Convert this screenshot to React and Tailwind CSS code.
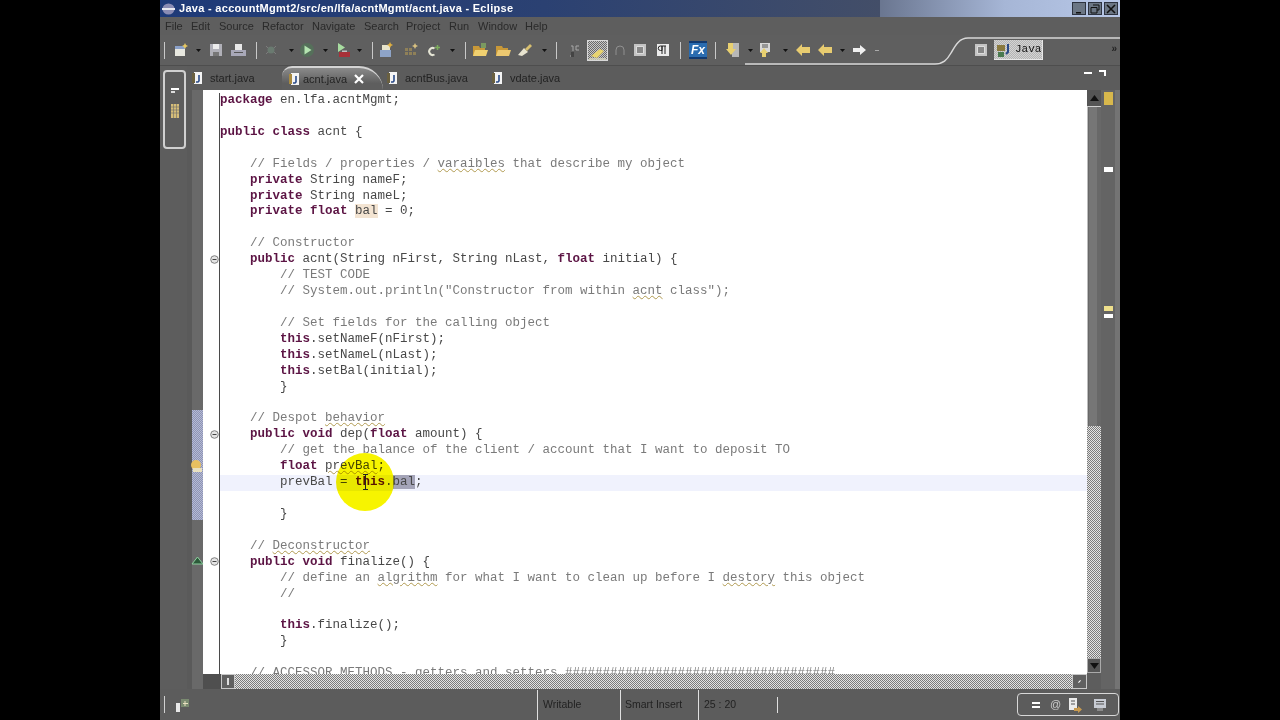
import React from "react";

const uiFont = "font-['Liberation_Sans',sans-serif]";
const checker =
  "bg-[repeating-conic-gradient(#7c7c7c_0%_25%,#e4e4e4_0%_50%)] bg-[length:2px_2px]";

// k = keyword, c = comment, w = misspelt comment word, t = plain code
const code = [
  [["k", "package"], ["t", " en.lfa.acntMgmt;"]],
  [],
  [["k", "public class"], ["t", " acnt {"]],
  [],
  [["c", "    // Fields / properties / "], ["w", "varaibles"], ["c", " that describe my object"]],
  [["k", "    private"], ["t", " String nameF;"]],
  [["k", "    private"], ["t", " String nameL;"]],
  [["k", "    private float"], ["t", " "], ["m", "bal"], ["t", " = 0;"]],
  [],
  [["c", "    // Constructor"]],
  [["k", "    public"], ["t", " acnt(String nFirst, String nLast, "], ["k", "float"], ["t", " initial) {"]],
  [["c", "        // TEST CODE"]],
  [["c", '        // System.out.println("Constructor from within '], ["w", "acnt"], ["c", ' class");']],
  [],
  [["c", "        // Set fields for the calling object"]],
  [["k", "        this"], ["t", ".setNameF(nFirst);"]],
  [["k", "        this"], ["t", ".setNameL(nLast);"]],
  [["k", "        this"], ["t", ".setBal(initial);"]],
  [["t", "        }"]],
  [],
  [["c", "    // Despot "], ["w", "behavior"]],
  [["k", "    public void"], ["t", " dep("], ["k", "float"], ["t", " amount) {"]],
  [["c", "        // get the balance of the client / account that I want to deposit TO"]],
  [["k", "        float"], ["t", " "], ["u", "prevBal"], ["t", ";"]],
  [["t", "        prevBal = "], ["k", "this"], ["t", "."], ["s", "bal"], ["t", ";"]],
  [],
  [["t", "        }"]],
  [],
  [["c", "    // "], ["w", "Deconstructor"]],
  [["k", "    public void"], ["t", " finalize() {"]],
  [["c", "        // define an "], ["w", "algrithm"], ["c", " for what I want to clean up before I "], ["w", "destory"], ["c", " this object"]],
  [["c", "        //"]],
  [],
  [["k", "        this"], ["t", ".finalize();"]],
  [["t", "        }"]],
  [],
  [["c", "    // ACCESSOR METHODS - getters and setters ####################################"]],
];

const segClass = {
  k: "font-bold text-[#5c1444]",
  c: "text-[#7a7a7a]",
  t: "text-[#484848]",
  w: "text-[#7a7a7a] underline decoration-wavy decoration-[#b09a50] decoration-1",
  u: "text-[#484848] underline decoration-wavy decoration-[#b09a50] decoration-1",
  m: "text-[#484848] bg-[#f3e4d2]",
  s: "text-[#484848] bg-[#a4a4b8]",
};

const foldRows = [10, 21, 29];

const Chev = ({ className = "" }) => (
  <svg width="7" height="16" viewBox="0 0 7 16" className={`shrink-0 ${className}`}>
    <path d="M1 7h5l-2.5 3z" fill="#111" />
  </svg>
);

const Sep = ({ className = "" }) => <div className={`w-px h-[17px] bg-[#c8c8c8] shrink-0 ${className}`} />;

// toolbar glyphs, all 16x16
const paths = {
  new: <><path d="M2 4h10v10H2z" fill="#e8e8e0" /><path d="M2 4h10v3H2z" fill="#8aa0c8" /><path d="M12 1l1 2 2 1-2 1-1 2-1-2-2-1 2-1z" fill="#e8c860" /></>,
  save: <><path d="M2 2h12v12H2z" fill="#b0b0b8" /><path d="M5 2h6v5H5z" fill="#ececec" /><path d="M5 10h6v4H5z" fill="#777" /></>,
  print: <><path d="M5 2h7v6H5z" fill="#e8e8e8" /><path d="M1 8h15v6H1z" fill="#a8a8b8" /><path d="M4 10h9v1H4z" fill="#555" /></>,
  debug: <><circle cx="8" cy="8" r="3.5" fill="#6a7a70" /><path d="M3 4l2 2M13 4l-2 2M3 12l2-2M13 12l-2-2" stroke="#7c7c7c" /></>,
  run: <><circle cx="8" cy="8" r="7" fill="#55705a" /><path d="M5.5 3.5l7 4.5-7 4.5z" fill="#b4e4b0" /></>,
  ext: <><path d="M3 1l7 4.5-7 4.5z" fill="#a8dca0" /><path d="M4 10h11v5H4z" fill="#a83038" /><path d="M7 8.5h5V10H7z" fill="#c0c0c0" /></>,
  pkg: <><path d="M2 8h11v7H2z" fill="#8ea4c8" /><path d="M4 3h8v5H4z" fill="#e8e4cc" /><path d="M12 0l1 2 2 1-2 1-1 2-1-2-2-1 2-1z" fill="#e0b040" /></>,
  cls: <><path d="M2 6h3v3H2zM6 6h3v3H6zM2 10h3v3H2zM6 10h3v3H6zM10 10h3v3h-3z" fill="#8f8058" /><path d="M12 1l1 2 2 1-2 1-1 2-1-2-2-1 2-1z" fill="#d8c080" /></>,
  c: <><path d="M9.5 6.5a3.5 3.5 0 1 0 0 6" stroke="#e4e4d4" strokeWidth="2" fill="none" /><path d="M12.5 3v5M10 5.5h5" stroke="#7cae5c" strokeWidth="1.5" /></>,
  open: <><path d="M1 4h6l1 2h5v8H1z" fill="#c89838" /><path d="M3 8h13l-2 6H1z" fill="#f0d070" /><path d="M9 1h5v5H9z" fill="#7a9a60" /></>,
  open2: <><path d="M1 4h6l1 2h5v8H1z" fill="#c89838" /><path d="M3 8h13l-2 6H1z" fill="#ecc870" /></>,
  search: <><path d="M1 13l6-7 4 4-6 4z" fill="#e8e4d0" /><path d="M8 7l5-5 2 2-5 5z" fill="#d8c070" /></>,
  sfc: <><path d="M6 9V4h-2M9 4h3M9 4v4h3M3 14h3" stroke="#a8a8a8" fill="none" /><path d="M4 10h3v5H4z" fill="#444" /></>,
  dim: <path d="M4 13V8a4 4 0 0 1 8 0v5" stroke="#909090" fill="none" />,
  page: <><path d="M2 2h12v12H2z" fill="#c4c4c4" /><path d="M4.5 4.5h7v7h-7z" fill="#888" stroke="#ddd" /></>,
  para: <><path d="M2 2h12v12H2z" fill="#ececec" /><path d="M7 4H5.5a2.2 2.2 0 0 0 0 4.5H7zM7 4v8M10 4v8M7 4h4" stroke="#222" fill="none" /></>,
  down: <><path d="M8 1h7v14H8z" fill="#b8b8b8" /><path d="M4 1h5v6h3l-5 6-5-6h2z" fill="#e8d070" /></>,
  up: <><path d="M3 1h10v9H3z" fill="#d8d8d8" /><path d="M5 3h6M5 5h6" stroke="#555" /><path d="M7 6l4 5H9v4H5v-4H3z" fill="#e8d070" /></>,
  back: <path d="M1 8l6-6v3h8v6H7v3z" fill="#e8cc70" />,
  fwd: <path d="M15 8L9 3v3H2v4h7v3z" fill="#f0f0f0" />,
  task: <><path d="M3 1h8v12H3z" fill="#ececec" /><path d="M5 4h4M5 7h4" stroke="#555" /><path d="M8 11h4V9l4 3.5-4 3.5v-2H8z" fill="#c89a50" /></>,
  msg: <><path d="M2 2h12v9H2z" fill="#c8ccd4" /><path d="M4 4.5h8M4 7h8" stroke="#555" /><path d="M5 11h6v3H5z" fill="#8a8a8a" /></>,
};

const Ic = ({ n, className = "" }) => (
  <svg width="16" height="16" viewBox="0 0 16 16" className={`shrink-0 ${className}`}>
    {paths[n]}
  </svg>
);

const JavaFile = ({ active }) => (
  <svg width="11" height="14" viewBox="0 0 11 14" className="shrink-0">
    <path d="M2 1h8v12H2z" fill="#f4f4f4" />
    <path d="M0 2h3v10H0z" fill={active ? "#a88a40" : "#6a6040"} />
    <path d="M7 4v6l-1 1H4" stroke="#2a4a88" strokeWidth="1.6" fill="none" />
  </svg>
);

const Tab = ({ name, active, className }) => (
  <div className={`flex items-center h-[24px] shrink-0 ${active ? "gap-[3px]" : "gap-[7px]"} ${className}`}>
    <JavaFile active={active} />
    <span className="text-[11px] text-[#232323]">{name}</span>
    {active && (
      <svg width="10" height="10" viewBox="0 0 10 10" className="ml-[4px]">
        <path d="M1 1l8 8M9 1l-8 8" stroke="#fff" strokeWidth="2.2" />
      </svg>
    )}
  </div>
);

const WinBtn = ({ children }) => (
  <div className="w-[14px] h-[13px] bg-[#6b7684] border border-[#2d3340] flex items-center justify-center">
    <svg width="10" height="10" viewBox="0 0 10 10">{children}</svg>
  </div>
);

const menus = [
  ["File", "w-[26px]"],
  ["Edit", "w-[28px]"],
  ["Source", "w-[43px]"],
  ["Refactor", "w-[50px]"],
  ["Navigate", "w-[52px]"],
  ["Search", "w-[42px]"],
  ["Project", "w-[43px]"],
  ["Run", "w-[29px]"],
  ["Window", "w-[47px]"],
  ["Help", "w-[30px]"],
];

export default function App() {
  return (
    <div className={`w-[1280px] h-[720px] bg-black flex justify-center overflow-hidden ${uiFont}`}>
      <div className="relative w-[960px] h-[720px] bg-[#5d5d5d] flex flex-col">
        {/* Title bar */}
        <div className="h-[17px] flex items-center pl-[2px] pr-[2px] bg-[linear-gradient(90deg,#1e3a78_0%,#2b4172_40%,#434e68_75%,#6a7690_75%,#a6b6d6_88%,#b8c8e8_100%)]">
          <svg width="14" height="12" viewBox="0 0 14 12" className="shrink-0">
            <ellipse cx="6.5" cy="6" rx="6" ry="5.5" fill="#8a8cb4" />
            <path d="M0 5h13v2H0z" fill="#e8e8f0" />
          </svg>
          <span className="ml-[3px] text-[11px] font-bold text-white whitespace-nowrap tracking-[0.3px]">
            Java - accountMgmt2/src/en/lfa/acntMgmt/acnt.java - Eclipse
          </span>
          <div className="ml-auto flex gap-[2px]">
            <WinBtn><path d="M2 8h5v1.5H2z" fill="#111" /></WinBtn>
            <WinBtn><path d="M3 1h6v5H7M1 3.5h6v5.5H1z" stroke="#111" fill="none" /></WinBtn>
            <WinBtn><path d="M1 1l8 8M9 1l-8 8" stroke="#111" strokeWidth="1.6" /></WinBtn>
          </div>
        </div>

        {/* Menu bar */}
        <div className="h-[18px] flex items-center pl-[5px] bg-[#5e5e5e]">
          {menus.map(([m, w]) => (
            <span key={m} className={`text-[11px] text-[#2a2a2a] ${w}`}>{m}</span>
          ))}
        </div>

        {/* Toolbar */}
        <div className="relative h-[31px] flex items-center pl-[4px] bg-[#5f5f5f] border-b border-[#4e4e4e]">
          <Sep />
          <Ic n="new" className="ml-[8px]" />
          <Chev className="ml-[6px]" />
          <Ic n="save" className="ml-[6px]" />
          <Ic n="print" className="ml-[6px]" />
          <Sep className="ml-[10px]" />
          <Ic n="debug" className="ml-[6px]" />
          <Chev className="ml-[9px]" />
          <Ic n="run" className="ml-[4px]" />
          <Chev className="ml-[7px]" />
          <Ic n="ext" className="ml-[6px]" />
          <Chev className="ml-[5px]" />
          <Sep className="ml-[9px]" />
          <Ic n="pkg" className="ml-[5px]" />
          <Ic n="cls" className="ml-[9px]" />
          <Ic n="c" className="ml-[6px]" />
          <Chev className="ml-[8px]" />
          <Sep className="ml-[9px]" />
          <Ic n="open" className="ml-[6px]" />
          <Ic n="open2" className="ml-[7px]" />
          <Ic n="search" className="ml-[6px]" />
          <Chev className="ml-[8px]" />
          <Sep className="ml-[8px]" />
          <Ic n="sfc" className="ml-[10px]" />
          <div className="ml-[4px] w-[21px] h-[21px] shrink-0 border border-[#d8d8d8] bg-[repeating-conic-gradient(#6a6a6a_0%_25%,#c8c8c8_0%_50%)] bg-[length:2px_2px]">
            <svg width="19" height="19" viewBox="0 0 19 19">
              <path d="M3 15l9-7 4 2-7 7z" fill="#e8d470" />
              <path d="M1 18h17" stroke="#d8d8c0" strokeWidth="1.5" />
            </svg>
          </div>
          <Ic n="dim" className="ml-[4px]" />
          <Ic n="page" className="ml-[4px]" />
          <Ic n="para" className="ml-[7px]" />
          <Sep className="ml-[9px]" />
          <div className="ml-[8px] w-[18px] h-[18px] shrink-0 bg-[#2a6cb0] border-t-2 border-b-2 border-[#123a70] flex items-center justify-center text-[12px] font-bold italic text-white leading-none">
            Fx
          </div>
          <Sep className="ml-[8px]" />
          <Ic n="down" className="ml-[8px]" />
          <Chev className="ml-[7px]" />
          <Ic n="up" className="ml-[3px]" />
          <Chev className="ml-[9px]" />
          <Ic n="back" className="ml-[6px]" />
          <Ic n="back" className="ml-[6px]" />
          <Chev className="ml-[6px]" />
          <Ic n="fwd" className="ml-[5px]" />
          <div className="ml-[8px] w-[4px] h-px bg-[#aaa] shrink-0" />

          {/* perspective switcher */}
          <div className="ml-[94px] flex items-center">
            <Ic n="page" />
            <div className="ml-[5px] w-[49px] h-[20px] flex items-center gap-[3px] pl-[2px] border-r border-b border-[#e8e8e8] bg-[repeating-conic-gradient(#b4b4b4_0%_25%,#d4d4d4_0%_50%)] bg-[length:2px_2px]">
              <svg width="16" height="14" viewBox="0 0 16 14" className="shrink-0">
                <path d="M1 2h8v6H1z" fill="#8a7a40" />
                <path d="M2 9h6v5H2z" fill="#4a7a50" />
                <path d="M12 1v8l-2 2" stroke="#2a4a88" strokeWidth="2" fill="none" />
              </svg>
              <span className="text-[11px] text-[#111] font-['Liberation_Mono',monospace]">Java</span>
            </div>
          </div>
          <span className="absolute right-[3px] top-[6px] text-[10px] font-bold text-[#222]">&raquo;</span>

          <svg width="375" height="31" viewBox="0 0 375 31" fill="none" className="absolute right-0 top-0">
            <path d="M0 29h190c8 0 12-4 16-11s8-15 17-15h152" stroke="#d8d8d8" strokeWidth="1.5" />
          </svg>
        </div>

        {/* Workbench */}
        <div className="flex-1 min-h-0 flex">
          {/* Fast view stack */}
          <div className="w-[27px] shrink-0 pt-[4px] pl-[3px]">
            <div className="w-[23px] h-[79px] rounded-[4px] border-2 border-[#d0d0d0] flex flex-col items-center pt-[16px] gap-[12px]">
              <div className="w-[8px] h-[4px] border-t-2 border-white flex justify-start">
                <div className="w-[4px] h-[2px] mt-px bg-[#ddd]" />
              </div>
              <svg width="10" height="16" viewBox="0 0 10 16">
                <path d="M1 0h8v14H1z" fill="#d4bc78" />
                <path d="M1 3h8M1 6h8M1 9h8M3.5 0v14M6.5 0v14" stroke="#6a6a6a" strokeWidth="0.6" />
              </svg>
            </div>
          </div>

          <div className="flex-1 min-w-0 flex flex-col">
            {/* Editor tabs */}
            <div className="h-[24px] shrink-0 flex items-center bg-[#5c5c5c]">
              <Tab name="start.java" className="ml-[1px] w-[94px] pl-[4px]" />
              <div className="w-[101px] h-[24px] flex items-center rounded-tl-[10px] rounded-tr-[24px] border-t-2 border-[#d4d4d4] bg-[linear-gradient(180deg,#8a8a8a,#5e5e5e_70%)]">
                <Tab name="acnt.java" active className="pl-[7px]" />
              </div>
              <Tab name="acntBus.java" className="ml-[4px] w-[101px]" />
              <Tab name="vdate.java" className="ml-[4px]" />
              <div className="ml-auto pr-[14px] mb-[10px] flex items-center gap-[7px]">
                <div className="w-[8px] h-[2px] bg-white" />
                <div className="w-[7px] h-[6px] border-t-2 border-r-2 border-white" />
              </div>
            </div>

            {/* Editor + rulers */}
            <div className="flex-1 min-h-0 flex">
              {/* Left annotation strip */}
              <div className="relative w-[16px] shrink-0 bg-[#5a5a5a] flex justify-end">
                <div className="w-[11px] bg-[#696969]" />
                <div className="absolute left-[5px] top-[320px] w-[11px] h-[110px] bg-[repeating-conic-gradient(#8d93b4_0%_25%,#b5bad4_0%_50%)] bg-[length:2px_2px]" />
                <svg width="14" height="14" viewBox="0 0 14 14" className="absolute left-[3px] top-[369px]">
                  <circle cx="6" cy="6" r="5" fill="#e8c060" />
                  <path d="M3 9h9v4H3z" fill="#e8e0c0" />
                </svg>
                <svg width="13" height="9" viewBox="0 0 13 9" className="absolute left-[4px] top-[466px]">
                  <path d="M6.5 1L12 8H1z" fill="#2c5a3a" stroke="#8fd0a0" />
                </svg>
              </div>

              {/* Text area */}
              <div className="flex-1 min-w-0 flex flex-col">
                <div className="flex-1 min-h-0 overflow-hidden bg-white pt-[3px] font-['Liberation_Mono',monospace] text-[12.5px]">
                  {code.map((line, i) => (
                    <div key={i} className="flex h-[15.93px] leading-[15.93px]">
                      <div className="w-[16px] shrink-0 flex items-center justify-end">
                        {foldRows.includes(i) && (
                          <svg width="9" height="9" viewBox="0 0 9 9" className="-mt-[2px]">
                            <circle cx="4.5" cy="4.5" r="3.8" fill="#e4e4e4" stroke="#808080" />
                            <path d="M2.5 4.5h4" stroke="#444" />
                          </svg>
                        )}
                      </div>
                      <div className={`flex-1 border-l border-[#4a4a4a] whitespace-pre ${i === 24 ? "bg-[#f0f2fd]" : ""}`}>
                        {line.map(([t, s], j) => (
                          <span key={j} className={segClass[t]}>{s}</span>
                        ))}
                      </div>
                    </div>
                  ))}
                </div>

                {/* Horizontal scrollbar */}
                <div className="h-[15px] shrink-0 flex bg-[#4f4f4f]">
                  <div className="w-[18px] shrink-0" />
                  <div className="w-[14px] shrink-0 bg-[#606060] border border-[#c8c8c8] flex items-center justify-center">
                    <div className="w-[2px] h-[7px] bg-[#ddd]" />
                  </div>
                  <div className={`flex-1 ${checker}`} />
                  <div className="w-[15px] shrink-0 bg-[#606060] border border-[#c8c8c8] flex items-center justify-center">
                    <div className="w-[3px] h-px bg-white -rotate-45" />
                  </div>
                </div>
              </div>

              {/* Vertical scrollbar */}
              <div className="w-[14px] shrink-0 flex flex-col mb-[16px]">
                <div className="h-[17px] shrink-0 bg-[#555] border-b border-[#d0d0d0] flex items-center justify-center">
                  <svg width="9" height="6" viewBox="0 0 9 6"><path d="M4.5 0L9 6H0z" fill="#111" /></svg>
                </div>
                <div className="h-[319px] shrink-0 bg-[#686868] border-l border-[#bdbdbd]">
                  <div className="w-[8px] h-full ml-[1px] bg-[#767676]" />
                </div>
                <div className={`flex-1 ${checker}`} />
                <div className="h-[15px] shrink-0 bg-[#555] border border-[#aaa] flex items-center justify-center">
                  <svg width="9" height="6" viewBox="0 0 9 6"><path d="M0 0h9L4.5 6z" fill="#111" /></svg>
                </div>
              </div>

              {/* Overview ruler */}
              <div className="w-[14px] shrink-0 flex flex-col items-center bg-[#646464] pt-[2px]">
                <div className="w-[9px] h-[13px] bg-[#d8b84c]" />
                <div className="mt-[62px] w-[9px] h-[5px] bg-white" />
                <div className="mt-[134px] w-[9px] h-[5px] bg-[#efe08c]" />
                <div className="mt-[3px] w-[9px] h-[4px] bg-white" />
              </div>
              <div className="w-[5px] shrink-0 bg-[#747474]" />
            </div>
          </div>
        </div>

        {/* Status bar */}
        <div className="h-[31px] shrink-0 flex items-center bg-[#5c5c5c] text-[10.5px] text-[#222]">
          <div className="ml-[4px] w-px h-[17px] bg-[#d0d0d0]" />
          <svg width="14" height="16" viewBox="0 0 14 16" className="ml-[11px] shrink-0">
            <path d="M0 6h4v9H0z" fill="#e8e8e8" />
            <path d="M5 2h8v8H5z" fill="#7a8a70" />
            <path d="M9 4v5M7 6.5h5" stroke="#e8e0c0" />
          </svg>
          <div className="ml-[347px] h-[30px] w-[83px] border-l border-[#e0e0e0] pl-[5px] flex items-center">Writable</div>
          <div className="h-[30px] w-[78px] border-l border-[#e0e0e0] pl-[4px] flex items-center">Smart Insert</div>
          <div className="h-[30px] w-[79px] border-l border-[#e0e0e0] pl-[5px] flex items-center">25 : 20</div>
          <div className="w-px h-[16px] bg-[#e0e0e0]" />
          <div className="ml-auto mr-px w-[102px] h-[23px] rounded-[4px] border border-[#d8d8d8] flex items-center pl-[14px] gap-[5px]">
            <div className="w-[8px] h-[6px] border-t-2 border-b-2 border-white" />
            <span className="text-[11px] leading-none text-[#ccc] ml-[5px]">@</span>
            <Ic n="task" />
            <Ic n="msg" className="ml-[5px]" />
          </div>
        </div>

        {/* Screen recorder pointer highlight */}
        <div className="absolute left-[176px] top-[453px] w-[58px] h-[58px] rounded-full bg-[#f7f400] mix-blend-multiply" />
        <div className="absolute left-[203px] top-[474px] w-[5px] h-[16px] border-y border-[#222] flex justify-center">
          <div className="w-px h-full bg-[#222]" />
        </div>
      </div>
    </div>
  );
}
